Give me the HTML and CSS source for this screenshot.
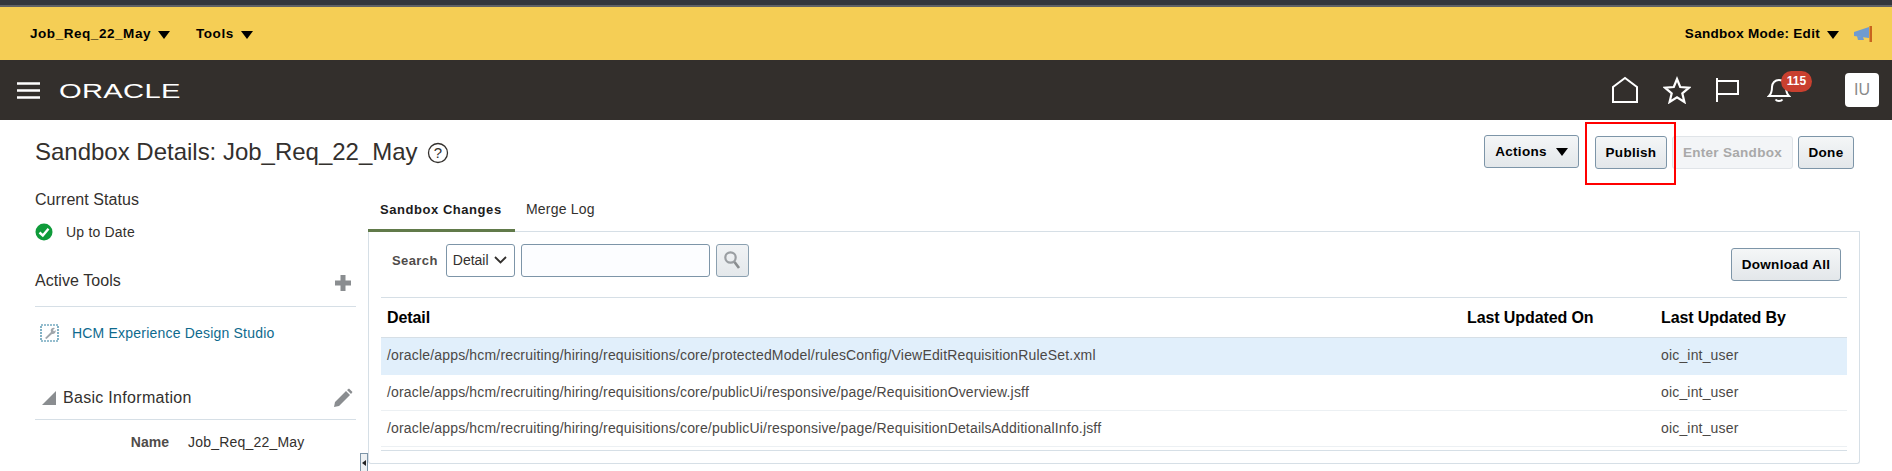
FILE: index.html
```html
<!DOCTYPE html>
<html lang="en">
<head>
<meta charset="utf-8">
<title>Sandbox Details</title>
<link rel="stylesheet" href="styles.css">
</head>
<body>
<div class="chrome"></div>
<div class="sandbox-bar">
  <div class="menu-item">Job_Req_22_May <span class="caret"></span></div>
  <div class="menu-item tools">Tools <span class="caret"></span></div>
  <div class="spacer"></div>
  <div class="menu-item mode">Sandbox Mode: Edit <span class="caret"></span></div>
  <svg class="megaphone" width="20" height="18" viewBox="0 0 20 18"><path d="M1 7 L16 2 V13 L1 11 Z" fill="#6f9bd1"/><path d="M4 11 L5 15 H11 L10 12 Z" fill="#6f9bd1"/><rect x="16.5" y="1" width="2.5" height="16" fill="#c8641e"/></svg>
</div>
<header class="global-bar">
  <svg class="hamburger" width="23" height="17" viewBox="0 0 23 17"><path d="M0 1.5H23M0 8.5H23M0 15.5H23" stroke="#fff" stroke-width="2.4"/></svg>
  <span class="logo">ORACLE</span>
  <div class="spacer"></div>
  <svg class="gicon home" width="28" height="28" viewBox="0 0 28 28"><path d="M2 26 V11 L14 2 L26 11 V26 Z" fill="none" stroke="#fff" stroke-width="2"/></svg>
  <svg class="gicon star" width="28" height="28" viewBox="0 0 28 28"><path d="M14 3 L17.2 11 L26 11.7 L19.3 17.3 L21.4 26 L14 21.3 L6.6 26 L8.7 17.3 L2 11.7 L10.8 11 Z" fill="none" stroke="#fff" stroke-width="2.2"/></svg>
  <svg class="gicon flag" width="24" height="26" viewBox="0 0 24 26"><path d="M2 1 V25 M2 4 H23 V17 H2" fill="none" stroke="#fff" stroke-width="2"/></svg>
  <div class="bell-wrap">
    <svg width="24" height="26" viewBox="0 0 24 26"><path d="M2 19 C5 16 5 13 5 10 C5 6 8 3 12 3 C16 3 19 6 19 10 C19 13 19 16 22 19 Z M8.5 22.5 C10 24.5 14 24.5 15.5 22.5" fill="none" stroke="#fff" stroke-width="2"/></svg>
    <span class="badge">115</span>
  </div>
  <div class="avatar">IU</div>
</header>
<main class="content">
  <div class="title-row">
    <h1 class="page-title">Sandbox Details: Job_Req_22_May</h1>
    <svg class="help" width="22" height="22" viewBox="0 0 22 22"><circle cx="11" cy="11" r="9.5" fill="none" stroke="#33302d" stroke-width="1.3"/><text x="11" y="16" text-anchor="middle" class="help-q">?</text></svg>
    <div class="spacer"></div>
    <button class="btn actions">Actions <span class="caret"></span></button>
    <button class="btn publish">Publish</button>
    <button class="btn disabled">Enter Sandbox</button>
    <button class="btn done">Done</button>
  </div>
  <div class="columns">
    <aside class="left">
      <h2 class="sec first">Current Status</h2>
      <div class="status">
        <svg width="18" height="18" viewBox="0 0 18 18"><circle cx="9" cy="9" r="8.5" fill="#0f9b3a"/><path d="M4.5 9.5 L7.8 12.5 L13.5 5.8" fill="none" stroke="#fff" stroke-width="2.4"/></svg>
        <span>Up to Date</span>
      </div>
      <div class="sec-head tools-head">
        <h2 class="sec">Active Tools</h2>
        <svg width="18" height="18" viewBox="0 0 18 18"><path d="M9 1V17M1 9H17" stroke="#8a8d90" stroke-width="5"/></svg>
      </div>
      <a class="tool-link">
        <svg width="20" height="18" viewBox="0 0 20 18"><rect x="1" y="1" width="17" height="16" fill="none" stroke="#2f7f9f" stroke-width="1.2" stroke-dasharray="2 1"/><path d="M5 14 L11 8 A3 3 0 0 1 15 4 L13 6 L14 7.5 L15.5 6 A3 3 0 0 1 12 10 L6.5 15 Z" fill="#a0a6ab"/></svg>
        <span>HCM Experience Design Studio</span>
      </a>
      <div class="sec-head basic-head">
        <svg class="tri" width="14" height="14" viewBox="0 0 14 14"><path d="M14 0 V14 H0 Z" fill="#8a8d90"/></svg>
        <h2 class="sec">Basic Information</h2>
        <div class="spacer"></div>
        <svg width="20" height="20" viewBox="0 0 20 20"><path d="M1 19 L2 14 L13 3 L17 7 L6 18 Z M14 2 L16 0.5 L19.5 4 L18 6 Z" fill="#8a8d90"/></svg>
      </div>
      <div class="field"><span class="field-label">Name</span><span>Job_Req_22_May</span></div>
    </aside>
    <section class="right">
      <nav class="tabs">
        <div class="tab active">Sandbox Changes</div>
        <div class="tab">Merge Log</div>
      </nav>
      <div class="panel">
        <div class="toolbar">
          <span class="search-label">Search</span>
          <div class="select">Detail <svg width="13" height="8" viewBox="0 0 13 8"><path d="M1 1 L6.5 6.5 L12 1" fill="none" stroke="#33302d" stroke-width="1.8"/></svg></div>
          <div class="input"></div>
          <div class="search-btn"><svg width="18" height="20" viewBox="0 0 18 20"><circle cx="7.5" cy="7.5" r="5.2" fill="none" stroke="#9a9ea2" stroke-width="2.2"/><path d="M11.5 12 L16 18" stroke="#8a8d90" stroke-width="2.6"/></svg></div>
          <div class="spacer"></div>
          <button class="btn download">Download All</button>
        </div>
        <table class="grid">
          <colgroup><col class="c1"><col class="c2"><col class="c3"></colgroup>
          <thead><tr><th>Detail</th><th>Last Updated On</th><th>Last Updated By</th></tr></thead>
          <tbody>
            <tr class="selected"><td>/oracle/apps/hcm/recruiting/hiring/requisitions/core/protectedModel/rulesConfig/ViewEditRequisitionRuleSet.xml</td><td></td><td>oic_int_user</td></tr>
            <tr><td>/oracle/apps/hcm/recruiting/hiring/requisitions/core/publicUi/responsive/page/RequisitionOverview.jsff</td><td></td><td>oic_int_user</td></tr>
            <tr><td>/oracle/apps/hcm/recruiting/hiring/requisitions/core/publicUi/responsive/page/RequisitionDetailsAdditionalInfo.jsff</td><td></td><td>oic_int_user</td></tr>
          </tbody>
        </table>
        <div class="grid-end"></div>
      </div>
    </section>
  </div>
</main>
<div class="red-box"></div>
<div class="splitter"><span></span></div>
</body>
</html>
```
FILE: styles.css
```css
* { box-sizing: border-box; }
html, body { margin: 0; height: 471px; overflow: hidden; background: #fff; }
body { font-family: "Liberation Sans", Arial, sans-serif; font-size: 13.5px; color: #33302d; position: relative; }
.spacer { flex: 1; }
.chrome { height: 7px; background: #33363d; border-bottom: 2px solid #5f6166; }
.sandbox-bar { height: 53px; background: #f5ce55; display: flex; align-items: center; padding: 0 19px 0 30px; }
.menu-item { font-weight: 700; font-size: 13.5px; letter-spacing: 0.55px; color: #000; display: flex; align-items: center; gap: 7px; }
.tools { margin-left: 26px; }
.mode { letter-spacing: 0.3px; }
.caret { display: inline-block; width: 0; height: 0; border-left: 6px solid transparent; border-right: 6px solid transparent; border-top: 8px solid #000; margin-top: 2px; }
.megaphone { margin-left: 14px; }
.global-bar { height: 60px; background: #332f2c; display: flex; align-items: center; padding: 0 13px 0 17px; color: #fff; }
.logo { margin-left: 19px; padding-top: 1px; font-size: 21px; font-weight: 400; letter-spacing: 0.2px; transform: scaleX(1.39); transform-origin: left; color: #fff; }
.gicon { display: block; }
.home { margin-right: 24px; }
.star { margin-right: 24px; }
.flag { margin-right: 28px; }
.bell-wrap { position: relative; width: 24px; height: 26px; margin-right: 54px; }
.badge { position: absolute; left: 14px; top: -6px; width: 31px; height: 21px; border-radius: 11px; background: #c9402f; color: #fff; font-size: 12px; font-weight: 700; text-align: center; line-height: 21px; }
.avatar { width: 34px; height: 34px; background: #fff; border-radius: 4px; color: #8a8a8a; font-size: 16px; text-align: center; line-height: 34px; }
.content { padding-left: 35px; }
.title-row { display: flex; align-items: center; height: 62px; padding-right: 38px; padding-top: 2px; }
.page-title { margin: 0; font-size: 24px; font-weight: 400; color: #33302d; letter-spacing: -0.01px; }
.help { margin-left: 9px; margin-top: 2px; }
.help-q { font-size: 15px; fill: #33302d; }
.btn { font-family: inherit; font-weight: 700; font-size: 13.5px; letter-spacing: 0.3px; color: #000; height: 33px; padding: 0; border: 1px solid #7d95a8; border-radius: 3px; background: linear-gradient(#f4f6f7, #e3e7ea); }
.actions { width: 95px; height: 33px; margin-right: 16px; margin-top: -2px; display: flex; align-items: center; justify-content: center; gap: 9px; }
.publish { width: 72px; margin-right: 5px; }
.disabled { width: 121px; margin-right: 5px; color: #a9a9a9; background: #f3f5f7; border-color: #e0e4e8; }
.done { width: 56px; }
.columns { display: flex; }
.left { width: 321px; flex: none; padding-top: 3px; }
.sec { margin: 0; font-size: 16px; font-weight: 400; color: #33302d; line-height: 20px; letter-spacing: 0.07px; }
.first { margin-top: 5px; }
.status { display: flex; align-items: center; gap: 13px; margin-top: 13px; font-size: 14px; letter-spacing: 0.2px; }
.sec-head { display: flex; align-items: center; border-bottom: 1px solid #d6dfe6; }
.tools-head { justify-content: space-between; margin-top: 20px; height: 46px; padding: 0 4px 6px 0; }
.tools-head svg { margin-top: 4px; }
.tool-link { display: flex; align-items: center; gap: 12px; margin: 17px 0 0 5px; color: #0e6a8e; font-size: 14px; letter-spacing: 0.2px; }
.basic-head { margin-top: 34px; height: 44px; padding: 0 3px 0 7px; }
.basic-head .sec { margin-left: 7px; letter-spacing: 0.3px; }
.field { display: flex; margin-top: 14px; font-size: 14px; gap: 19px; letter-spacing: 0.2px; }
.field-label { width: 134px; text-align: right; font-weight: 700; color: #4f4c4a; letter-spacing: 0; }
.right { margin-left: 12px; width: 1492px; flex: none; margin-top: 8px; }
.tabs { display: flex; height: 42px; border-bottom: 1px solid #d6dfe6; }
.tab { padding: 0 12px; line-height: 39px; font-size: 14px; letter-spacing: 0.2px; }
.tab.active { width: 147px; font-weight: 700; font-size: 13px; letter-spacing: 0.55px; color: #1c1c1c; border-bottom: 3px solid #617a4a; height: 42px; }
.tab + .tab { padding-left: 11px; }
.panel { border: 1px solid #d6dfe6; border-top: 0; border-radius: 0 0 3px 3px; height: 232px; padding: 0 12px; }
.toolbar { display: flex; align-items: center; height: 66px; padding: 0 6px 9px 10px; border-bottom: 1px solid #d6dfe6; }
.search-label { font-weight: 700; font-size: 13px; letter-spacing: 0.4px; color: #4f4c4a; margin-right: 8px; margin-left: 1px; }
.select { width: 69px; height: 33px; border: 1px solid #7d95a8; border-radius: 3px; padding-left: 6px; display: flex; align-items: center; gap: 5px; font-size: 14px; background: #fff; }
.input { width: 189px; height: 33px; margin-left: 6px; border: 1px solid #7d95a8; border-radius: 3px; background: #fcfdff; }
.search-btn { width: 33px; height: 33px; margin-left: 6px; border: 1px solid #8ba0b0; border-radius: 3px; background: linear-gradient(#f1f3f5, #e4e8eb); display: flex; align-items: center; justify-content: center; }
.download { width: 110px; margin-top: 8px; }
.grid { width: 100%; border-collapse: collapse; table-layout: fixed; }
.c1 { width: 1079px; }
.c2 { width: 194px; }
.grid th { text-align: left; height: 39px; padding: 1px 7px 0; font-size: 16px; font-weight: 700; color: #000; border-bottom: 1px solid #d6dfe6; letter-spacing: -0.1px; }
.grid th:first-child { padding-left: 6px; }
.grid td { height: 36px; padding: 0 7px 1px; font-size: 14px; letter-spacing: 0.17px; color: #4b4846; border-bottom: 1px solid #ecf0f3; white-space: nowrap; overflow: visible; }
.grid td:first-child { padding-left: 6px; }
.selected td { height: 37px; background: #e1effb; border-bottom-color: #e1effb; }
.grid-end { height: 4px; border-bottom: 1px solid #d6dfe6; }
.red-box { position: absolute; left: 1585px; top: 122px; width: 91px; height: 63px; border: 2px solid #f00; }
.splitter { position: absolute; left: 360px; top: 453px; width: 8px; height: 18px; border: 1px solid #7d95a8; border-bottom: 0; background: #eef1f3; }
.splitter span { position: absolute; left: 1px; top: 6px; width: 0; height: 0; border-top: 3px solid transparent; border-bottom: 3px solid transparent; border-right: 4px solid #222; }
```
